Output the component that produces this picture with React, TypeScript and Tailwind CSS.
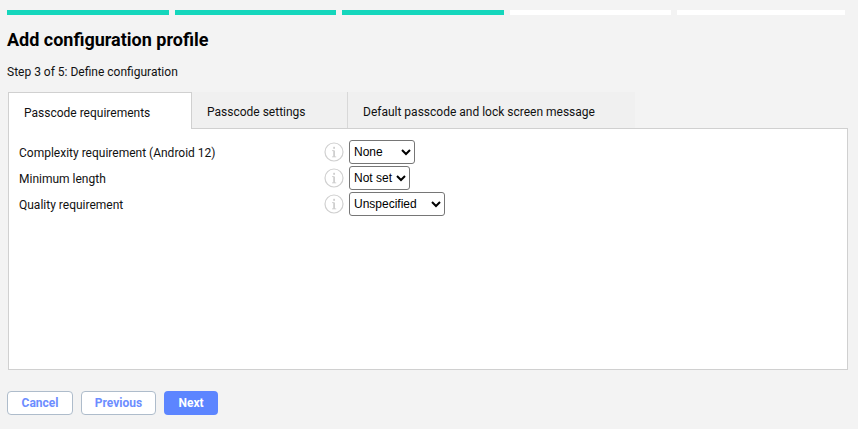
const steps = [
  { width: "w-[162px]", color: "bg-[#14d6bc]" },
  { width: "w-[161px]", color: "bg-[#14d6bc]" },
  { width: "w-[162px]", color: "bg-[#14d6bc]" },
  { width: "w-[161px]", color: "bg-white" },
  { width: "w-[168px]", color: "bg-white" },
];

const fields = [
  { label: "Complexity requirement (Android 12)", options: ["None", "Low", "Medium", "High"], width: "w-[66px]" },
  { label: "Minimum length", options: ["Not set", "4", "6", "8"], width: "w-[61px]" },
  { label: "Quality requirement", options: ["Unspecified", "Numeric", "Alphabetic"], width: "w-[96px]" },
];

function InfoIcon() {
  return (
    <svg width="20" height="20" viewBox="0 0 20 20" fill="none" className="shrink-0">
      <circle cx="10" cy="10" r="9" stroke="#d0d0d0" strokeWidth="1.2" />
      <rect x="9.2" y="8.5" width="1.8" height="6.5" fill="#cfcfcf" />
      <rect x="9.2" y="4.8" width="1.8" height="2" fill="#cfcfcf" />
      <rect x="8" y="8.2" width="2" height="0.9" fill="#cfcfcf" />
      <rect x="8" y="14.4" width="4.2" height="0.9" fill="#cfcfcf" />
    </svg>
  );
}

export default function App() {
  return (
    <div className="h-[429px] w-[858px] overflow-hidden bg-[#f3f3f3] font-['Roboto',sans-serif] text-[#111]">
      {/* Progress */}
      <div className="flex gap-[6px] pl-[7px] pt-[10px]">
        {steps.map((step, i) => (
          <div key={i} className={`h-[5px] ${step.width} ${step.color}`} />
        ))}
      </div>

      {/* Header */}
      <h1 className="mt-[13px] pl-[7px] text-[18px] leading-[24px] font-bold text-black">Add configuration profile</h1>
      <p className="mt-[12px] pl-[7px] text-[12px] leading-[16px]">Step 3 of 5: Define configuration</p>

      {/* Tabs */}
      <div className="relative z-10 mt-[12px] ml-[8px] flex h-[37px] text-[12px]">
        <div className="flex h-[37px] w-[184px] items-center border-x border-t border-[#d0d0d0] bg-white pl-[15px] pt-[4px]">
          Passcode requirements
        </div>
        <div className="flex h-[36px] w-[156px] items-center border-r border-[#d8d8d8] bg-[#f0f0f0] pl-[15px] pt-[4px]">
          Passcode settings
        </div>
        <div className="flex h-[36px] w-[287px] items-center bg-[#f0f0f0] pl-[15px] pt-[4px]">
          Default passcode and lock screen message
        </div>
      </div>

      {/* Panel */}
      <div className="-mt-[1px] ml-[8px] flex h-[242px] w-[840px] flex-col gap-[2px] border border-[#d0d0d0] bg-white pl-[10px] pt-[11px]">
        {fields.map((field) => (
          <div key={field.label} className="flex h-[24px] items-center text-[12px]">
            <span className="w-[305px] pt-[2px]">{field.label}</span>
            <InfoIcon />
            <select
              className={`ml-[5px] h-[24px] ${field.width} rounded-[3px] border border-[#767676] bg-white font-['Liberation_Sans',sans-serif] text-[12px] text-black`}
              defaultValue={field.options[0]}
            >
              {field.options.map((option) => (
                <option key={option}>{option}</option>
              ))}
            </select>
          </div>
        ))}
      </div>

      {/* Actions */}
      <div className="mt-[21px] ml-[7px] flex text-[12px] font-bold">
        <button className="h-[24px] w-[66px] rounded-[4px] border border-[#aebccb] bg-white text-[#6c8dff]">Cancel</button>
        <button className="ml-[8px] h-[24px] w-[75px] rounded-[4px] border border-[#aebccb] bg-white text-[#6c8dff]">Previous</button>
        <button className="ml-[8px] h-[24px] w-[54px] rounded-[4px] bg-[#5c85ff] text-white">Next</button>
      </div>
    </div>
  );
}
